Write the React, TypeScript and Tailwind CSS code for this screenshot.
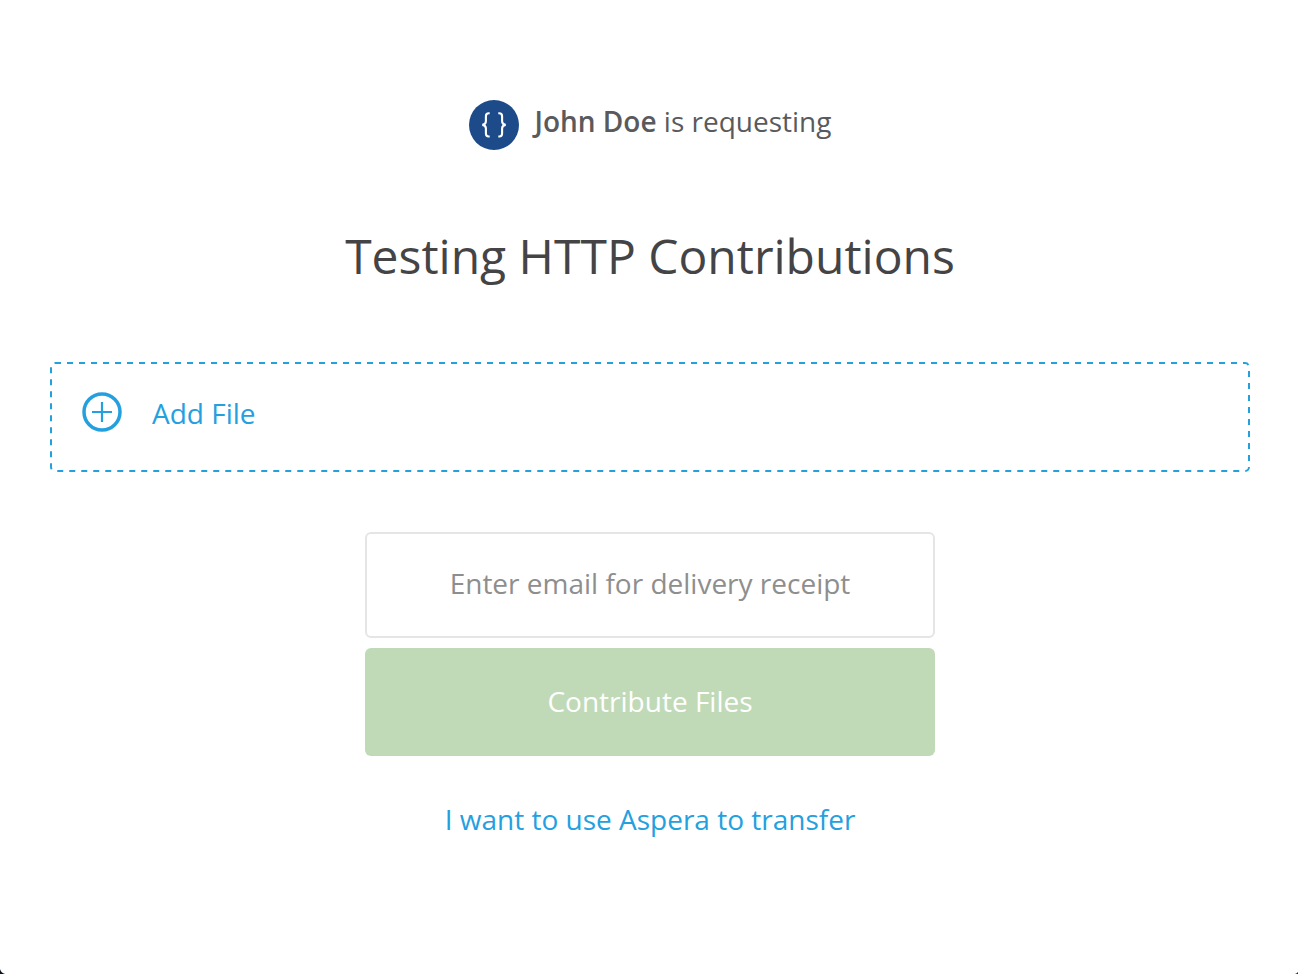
import React, { useRef, useState } from 'react';

const Avatar: React.FC = () => (
  <svg className="h-[50px] w-[50px]" viewBox="0 0 50 50" fill="none" aria-hidden="true">
    <circle cx="25" cy="25" r="25" fill="#1d4a89" />
    <path
      d="M20.700 13.300h-1c-2 0-2.800 1-2.800 3v5c0 2-1 3.300-3.600 3.600 2.600.3 3.600 1.600 3.600 3.600v5c0 2 .8 3 2.800 3h1M29.300 13.300h1c2 0 2.800 1 2.800 3v5c0 2 1 3.300 3.600 3.600-2.600.3-3.600 1.600-3.600 3.600v5c0 2-.8 3-2.800 3h-1"
      stroke="#fff"
      strokeWidth="2.100"
    />
  </svg>
);

const AddFile: React.FC = () => {
  const inputRef = useRef<HTMLInputElement>(null);

  return (
    <div className="relative">
      {/* Dashed outline, 6 on / 6 off */}
      <svg className="pointer-events-none absolute inset-0 h-full w-full" fill="none" aria-hidden="true">
        <rect
          x="1"
          y="1"
          rx="4"
          className="h-[calc(100%-2px)] w-[calc(100%-2px)]"
          stroke="#25a0df"
          strokeWidth="2"
          strokeDasharray="6 6"
        />
      </svg>
      <button
        type="button"
        onClick={() => inputRef.current?.click()}
        className="flex h-[110px] w-full items-start gap-[30px] px-8 pt-[30px] text-left text-[#25a0df]"
      >
        <svg className="h-10 w-10" viewBox="0 0 40 40" fill="none" stroke="currentColor" aria-hidden="true">
          <circle cx="20" cy="20" r="18" strokeWidth="3.500" />
          <path d="M20 10v20M10 20h20" strokeWidth="2.200" />
        </svg>
        <span className="pt-px">Add File</span>
      </button>
      <input ref={inputRef} type="file" multiple aria-label="Add File" className="hidden" />
    </div>
  );
};

export default function App() {
  const [email, setEmail] = useState('');

  return (
    <main className="relative min-h-screen bg-white pt-[100px] pr-12 pb-12 pl-[50px] font-['Open_Sans',sans-serif] text-[28px] leading-10 text-[#5a5a5c]">
      <div className="flex items-start justify-center gap-4">
        <Avatar />
        <p className="pt-px">
          <span className="font-semibold">John Doe</span> is requesting
        </p>
      </div>

      <h1 className="mt-[72px] text-center text-[48px] leading-[68px] text-[#444446]">Testing HTTP Contributions</h1>

      <div className="mt-[72px]">
        <AddFile />
      </div>

      <form className="mx-auto mt-[60px] flex max-w-[570px] flex-col gap-[10px]" onSubmit={e => e.preventDefault()}>
        <input
          type="email"
          value={email}
          onChange={e => setEmail(e.target.value)}
          aria-label="Enter email for delivery receipt"
          placeholder="Enter email for delivery receipt"
          className="h-[106px] w-full rounded-md border-2 border-[#e5e5e5] px-6 pb-1 text-center outline-none placeholder:text-[#8e8e8e]"
        />
        <button type="submit" disabled className="h-[108px] w-full rounded-md bg-[#c0dab7] pb-[2px] text-white">
          Contribute Files
        </button>
      </form>

      <p className="mt-[43px] text-center">
        <a href="#aspera" className="text-[#25a0df]">I want to use Aspera to transfer</a>
      </p>

      {/* Window corners */}
      <svg className="absolute bottom-0 left-0 h-[5px] w-[5px]" viewBox="0 0 5 5" aria-hidden="true">
        <path d="M0 0Q1 4 5 5H0z" fill="#0b1420" />
      </svg>
      <svg className="absolute right-0 bottom-0 h-[2px] w-[3px]" viewBox="0 0 3 2" aria-hidden="true">
        <path d="M3 0Q2 1.500 0 2H3z" fill="#222" />
      </svg>
    </main>
  );
}
